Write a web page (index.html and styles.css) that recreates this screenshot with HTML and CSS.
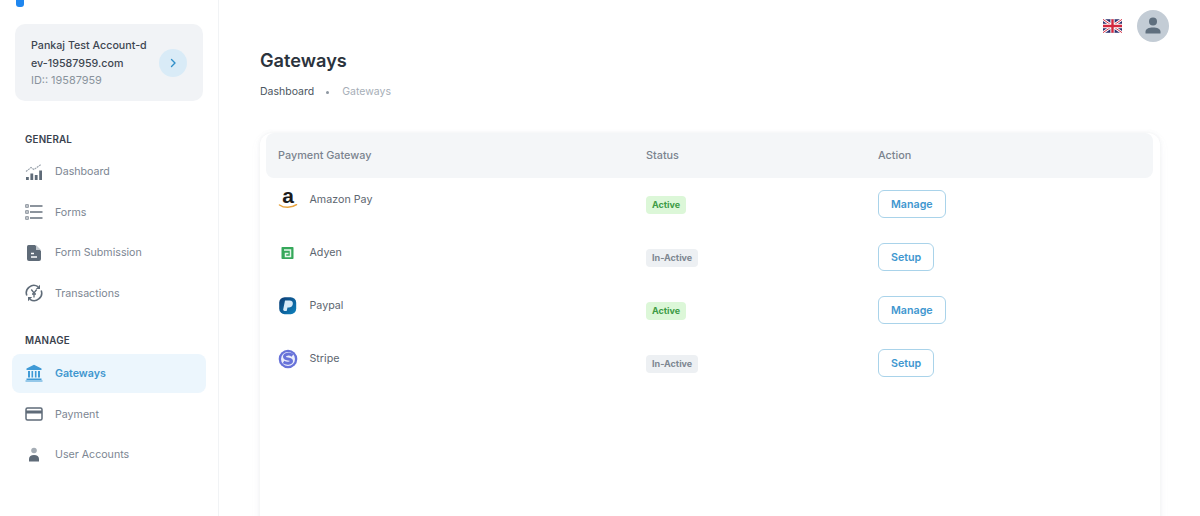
FILE: index.html
```html
<!DOCTYPE html>
<html lang="en">
<head>
<meta charset="utf-8">
<title>Gateways</title>
<link rel="stylesheet" href="styles.css">
</head>
<body>
<div class="app">
  <aside class="sidebar">
    <div class="logo"></div>
    <div class="account">
      <div class="account-text">
        <div class="account-name">Pankaj Test Account-d<br>ev-19587959.com</div>
        <div class="account-id">ID:: 19587959</div>
      </div>
      <div class="account-go">
        <svg width="10" height="10" viewBox="0 0 10 10"><path d="M3.500 1.500 7 5 3.500 8.500" fill="none" stroke="#2f8fc9" stroke-width="1.400" stroke-linecap="round" stroke-linejoin="round"/></svg>
      </div>
    </div>
    <div class="nav-title nav-title-general">GENERAL</div>
    <nav class="nav">
      <a class="nav-item">
        <svg class="nav-icon" viewBox="0 0 18 18"><path d="M1 8.500 6 4.500l3 2 7-5" fill="none" stroke="#98a1ab" stroke-width="1.100" stroke-dasharray="2 .7"/><rect x="1" y="14" width="2.800" height="3" fill="#5f6b78"/><rect x="5.400" y="10.500" width="2.800" height="6.500" fill="#5f6b78"/><rect x="9.800" y="12" width="2.800" height="5" fill="#5f6b78"/><rect x="14.200" y="7.500" width="2.800" height="9.500" fill="#5f6b78"/></svg>
        <span>Dashboard</span>
      </a>
      <a class="nav-item">
        <svg class="nav-icon" viewBox="0 0 18 18"><g fill="none" stroke="#67727e"><rect x=".8" y="1.800" width="2.400" height="2.400" stroke-width=".9"/><rect x=".8" y="7.800" width="2.400" height="2.400" stroke-width=".9"/><rect x=".8" y="13.800" width="2.400" height="2.400" stroke-width=".9"/><path d="M5 3h12.500M5 9h12.500M5 15h12.500" stroke-width="1.300"/></g></svg>
        <span>Forms</span>
      </a>
      <a class="nav-item">
        <svg class="nav-icon" viewBox="0 0 18 18"><path d="M3.500 1H10l6 6v8a2 2 0 0 1-2 2H4a2 2 0 0 1-2-2V2.500A1.500 1.500 0 0 1 3.500 1z" fill="#5f6b78"/><path d="M11 1l5 5h-5z" fill="#c3c9cf"/><path d="M6 9.500h3M6 13h6" stroke="#fff" stroke-width="1.300"/></svg>
        <span>Form Submission</span>
      </a>
      <a class="nav-item">
        <svg class="nav-icon" viewBox="0 0 18 18"><g fill="none" stroke="#5f6b78" stroke-width="1.600"><path d="M1.800 11.500A7.500 7.500 0 0 1 13 2.700"/><path d="M16.200 6.500A7.500 7.500 0 0 1 5 15.300"/><path d="M6.300 5.500 9 9l2.700-3.500M9 9v4.500M7 10h4" stroke-width="1.300"/></g><path d="M15 .8v4.200h-4.200zM3 17.200V13h4.200z" fill="#5f6b78"/></svg>
        <span>Transactions</span>
      </a>
    </nav>
    <div class="nav-title nav-title-manage">MANAGE</div>
    <nav class="nav">
      <a class="nav-item nav-item-active">
        <svg class="nav-icon" viewBox="0 0 18 18"><path d="M9 .8 16.500 4.500v1.500h-15V4.500z" fill="#3f9ad6"/><path d="M3 7h2v6.500H3zM6.500 7h1.600v6.500H6.500zM9.900 7h1.600v6.500H9.900zM13 7h2v6.500h-2z" fill="#3f9ad6"/><path d="M1.500 14.500h15V16h-15zM.5 16.500h17V17.500H.5z" fill="#3f9ad6"/></svg>
        <span>Gateways</span>
      </a>
      <a class="nav-item">
        <svg class="nav-icon" viewBox="0 0 18 18"><rect x="1" y="3" width="16" height="12" rx="1.500" fill="none" stroke="#5f6b78" stroke-width="1.500"/><rect x="1" y="5.500" width="16" height="3" fill="#5f6b78"/></svg>
        <span>Payment</span>
      </a>
      <a class="nav-item">
        <svg class="nav-icon" viewBox="0 0 18 18"><circle cx="9" cy="4.500" r="2.800" fill="#a5adb5"/><path d="M4 15.500v-2.500C4 10.500 6 9 9 9s5 1.500 5 4v2.500z" fill="#5f6b78"/></svg>
        <span>User Accounts</span>
      </a>
    </nav>
  </aside>
  <main class="main">
    <header class="topbar">
      <svg class="flag" viewBox="0 0 20 14">
        <rect width="20" height="14" rx="1.500" fill="#2a2f6e"/>
        <path d="M0 0 20 14M20 0 0 14" stroke="#fff" stroke-width="3"/>
        <path d="M0 0 20 14M20 0 0 14" stroke="#d3273e" stroke-width="1"/>
        <path d="M10 0v14M0 7h20" stroke="#fff" stroke-width="4.500"/>
        <path d="M10 0v14M0 7h20" stroke="#d3273e" stroke-width="2.500"/>
      </svg>
      <div class="avatar">
        <svg width="20" height="20" viewBox="0 0 20 20"><circle cx="10" cy="5.500" r="4" fill="#5f6f7e"/><path d="M2.500 17.500v-1.800c0-2.800 3.300-4.200 7.500-4.200s7.500 1.400 7.500 4.200v1.800z" fill="#5f6f7e"/></svg>
      </div>
    </header>
    <h1 class="page-title">Gateways</h1>
    <div class="crumbs">
      <span class="crumb">Dashboard</span>
      <span class="crumb-dot"></span>
      <span class="crumb crumb-current">Gateways</span>
    </div>
    <section class="card">
      <div class="row row-head">
        <div>Payment Gateway</div>
        <div>Status</div>
        <div>Action</div>
      </div>
      <div class="row">
        <div class="gateway">
          <div class="amazon-logo"><span class="amazon-a">a</span><svg class="amazon-smile" viewBox="0 0 20 6"><path d="M1.500 1c4.500 3.200 12 3.200 17-.3" fill="none" stroke="#e8a33d" stroke-width="1.500" stroke-linecap="round"/></svg></div>
          <span>Amazon Pay</span>
        </div>
        <div><span class="badge badge-on">Active</span></div>
        <div class="action"><a class="btn">Manage</a></div>
      </div>
      <div class="row">
        <div class="gateway">
          <svg class="logo-icon" viewBox="0 0 20 20"><rect x="3.500" y="4" width="12" height="12" rx=".8" fill="#35a85a"/><path d="M6 7h6.500v6.500H7.500v-3h3" fill="none" stroke="#e6f7ec" stroke-width="1.500"/></svg>
          <span>Adyen</span>
        </div>
        <div><span class="badge badge-off">In-Active</span></div>
        <div class="action"><a class="btn">Setup</a></div>
      </div>
      <div class="row">
        <div class="gateway">
          <svg class="logo-icon" viewBox="0 0 20 20"><defs><linearGradient id="pp" x1="0" y1="0" x2="1" y2="1"><stop offset="0" stop-color="#0c3a72"/><stop offset="1" stop-color="#0f84c0"/></linearGradient></defs><rect x="1.200" y="1.200" width="17" height="17" rx="5.500" fill="url(#pp)"/><path d="M7 4.500h4.500c2.500 0 3.800 1.500 3.300 3.700-.5 2.300-2 3.300-4 3.300H9.500l-.8 3.500c-2.800.3-3.700-.5-3.500-1.500z" fill="#d6e9f8"/></svg>
          <span>Paypal</span>
        </div>
        <div><span class="badge badge-on">Active</span></div>
        <div class="action"><a class="btn">Manage</a></div>
      </div>
      <div class="row">
        <div class="gateway">
          <svg class="logo-icon" viewBox="0 0 20 20"><circle cx="10" cy="10" r="9.300" fill="#6772d9"/><circle cx="10" cy="10" r="7" fill="#eceefb"/><path d="M14.500 6.500c-2.500-2-8-2-8 1.300 0 3.400 7 1 7 4.300 0 2.600-5.500 2.600-8 1" fill="none" stroke="#6772d9" stroke-width="3"/></svg>
          <span>Stripe</span>
        </div>
        <div><span class="badge badge-off">In-Active</span></div>
        <div class="action"><a class="btn">Setup</a></div>
      </div>
    </section>
  </main>
</div>
</body>
</html>
```

FILE: styles.css
```css
* { box-sizing: border-box; }
html, body { margin: 0; height: 516px; overflow: hidden; background: #fff; }
body { font-family: Inter, "Liberation Sans", sans-serif; color: #212b36; }
.app { display: flex; height: 516px; overflow: hidden; }

.sidebar { width: 219px; flex: none; border-right: 1px solid #f1f3f5; padding: 0 12px; }
.logo { width: 8px; height: 7px; margin-left: 4px; background: #1f86ef; border-radius: 0 0 3px 3px; }
.account { margin: 17px 3px 0 3px; height: 77px; border-radius: 10px; background: #f1f3f6; padding: 12px 16px; display: flex; align-items: center; justify-content: space-between; }
.account-name { font-size: 10.700px; line-height: 17.500px; font-weight: 500; color: #3d4651; white-space: nowrap; }
.account-id { font-size: 10.900px; line-height: 16px; color: #8a939d; }
.account-go { width: 28px; height: 28px; border-radius: 50%; background: #d9ebf7; display: flex; align-items: center; justify-content: center; flex: none; }

.nav-title { font-size: 9.800px; line-height: 12px; font-weight: 600; color: #39424d; padding-left: 13px; letter-spacing: .2px; }
.nav-title-general { margin-top: 33px; }
.nav-title-manage { margin-top: 22px; }
.nav { display: flex; flex-direction: column; gap: 1.670px; margin-top: 7px; }
.nav-title-general + .nav { margin-top: 6px; }
.nav-item { height: 39px; width: 194px; display: flex; align-items: center; gap: 12px; padding-left: 13px; border-radius: 8px; font-size: 10.650px; color: #7c8692; }
.nav-icon { width: 18px; height: 18px; flex: none; }
.nav-item-active { background: #ecf6fd; color: #3f97cf; font-weight: 600; }

.main { flex: 1; min-width: 0; padding: 0 40px 0 41px; }
.topbar { height: 42px; display: flex; justify-content: flex-end; align-items: center; gap: 15px; padding-top: 10px; margin-right: -9px; }
.flag { width: 19px; height: 14px; display: block; }
.avatar { width: 32px; height: 32px; border-radius: 50%; background: #c3ccd5; display: flex; align-items: center; justify-content: center; }
.page-title { margin: 7px 0 0; font-size: 18.200px; line-height: 22px; font-weight: 600; color: #2b333d; }
.crumbs { display: flex; align-items: center; margin-top: 14px; font-size: 10.500px; line-height: 14px; }
.crumb { color: #4c5661; }
.crumb-current { color: #a6aeb7; }
.crumb-dot { width: 3px; height: 3px; border-radius: 50%; background: #8d96a0; margin: 0 13px 0 12px; }
.card { margin-top: 34px; width: 900px; height: 420px; padding: 0 7px 0 6px; background: #fff; border-radius: 12px; box-shadow: 0 0 4px rgba(145, 158, 171, .14), 0 4px 12px rgba(145, 158, 171, .06); }

.row { display: grid; grid-template-columns: 368px 232px 1fr; align-items: center; height: 53px; padding-left: 12px; font-size: 10.700px; color: #5d6670; }
.row-head { height: 45px; padding-bottom: 1px; background: #f4f6f8; border-radius: 8px; font-size: 10.850px; font-weight: 500; color: #7a838e; }
.gateway { display: flex; align-items: center; gap: 11.500px; margin-top: -10px; }
.logo-icon { width: 20px; height: 20px; flex: none; }
.amazon-logo { position: relative; width: 20px; height: 20px; flex: none; text-align: center; }
.amazon-a { display: block; font-family: "Liberation Sans", sans-serif; font-size: 21px; line-height: 12px; font-weight: 700; color: #1c1c1c; }
.amazon-smile { position: absolute; left: 0; bottom: 0; width: 20px; height: 6px; }
.badge { display: inline-block; height: 18px; line-height: 18px; padding: 0 6px; border-radius: 4px; font-size: 9px; font-weight: 700; }
.badge-on { background: #dcf7d8; color: #3d9c46; }
.badge-off { background: #edf0f3; color: #7d8791; }
.action { display: flex; align-items: flex-start; margin-top: -1px; }
.btn { display: flex; align-items: center; height: 28px; padding: 1px 12px 0; border: 1px solid #a9d3ea; border-radius: 6px; font-size: 10.700px; font-weight: 600; color: #3f97cf; background: #fff; }
```
